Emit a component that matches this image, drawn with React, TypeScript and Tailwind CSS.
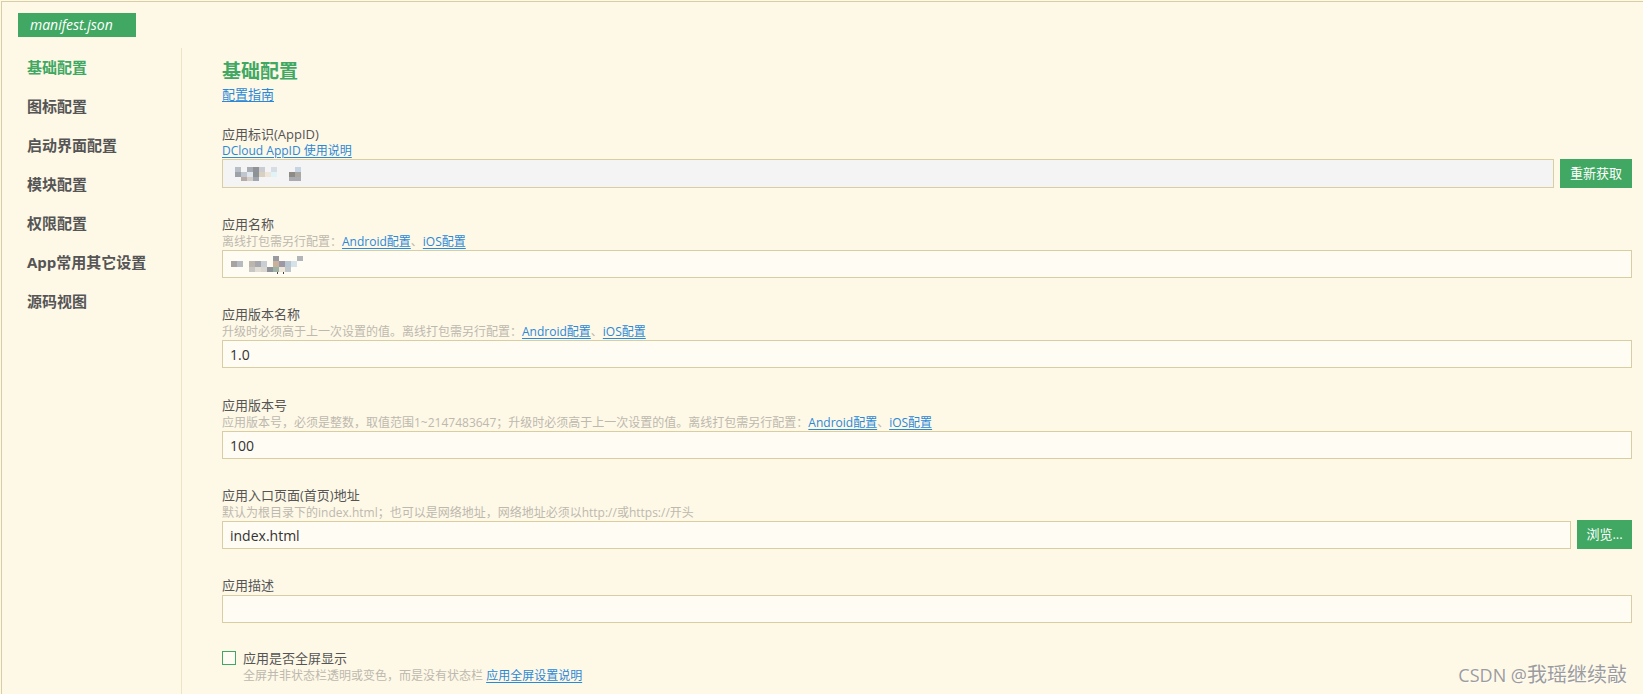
import React from "react";

const FONT = { fontFamily: '"Open Sans", "Noto Sans CJK SC", sans-serif' };

function Link({ children }: { children: React.ReactNode }) {
  return <span className="text-[#2b88d8] underline underline-offset-2 decoration-[#2b88d8]">{children}</span>;
}

function Label({ children }: { children: React.ReactNode }) {
  return <div className="text-[13px] leading-[18px] text-[#555]">{children}</div>;
}

function Hint({ children }: { children: React.ReactNode }) {
  return <div className="text-[12px] leading-[17px] text-[#bdb9ae] whitespace-nowrap">{children}</div>;
}

function Input({ value, children, disabled }: { value?: string; children?: React.ReactNode; disabled?: boolean }) {
  return (
    <div
      className={`flex-1 h-[28px] border border-[#d9cda2] flex items-center pl-[7px] text-[14px] text-[#333] ${
        disabled ? "bg-[#f4f4f4]" : "bg-[#fffcf4]"
      }`}
    >
      {value}
      {children}
    </div>
  );
}

function AppIdMosaic() {
  const r: [number, number, number, number, string][] = [
    [0, 0, 6, 5, "#b8bec6"], [12, 0, 6, 5, "#a9adb3"], [18, 0, 6, 5, "#8f9398"], [24, 0, 6, 5, "#c9ccd0"], [36, 0, 6, 5, "#d6dde5"],
    [0, 5, 6, 5, "#9da2a8"], [6, 5, 6, 5, "#c0c6cd"], [12, 5, 6, 5, "#dfe6ee"], [18, 5, 6, 5, "#8d9297"], [24, 5, 6, 5, "#d8d0c0"],
    [30, 5, 6, 5, "#ece6dc"], [36, 5, 6, 5, "#e0f4f8"],
    [6, 10, 6, 4, "#b5aaa6"], [12, 10, 6, 4, "#d4cec8"], [18, 10, 6, 4, "#a0a6ae"],
    [54, 5, 6, 5, "#8e8a85"], [60, 5, 6, 5, "#aaa7a3"], [60, 0, 6, 5, "#c5d5e3"], [54, 10, 12, 4, "#a9abb0"],
  ];
  return (
    <svg width="72" height="14" className="ml-[2px]">
      {r.map(([x, y, w, h, c], i) => (
        <rect key={i} x={x} y={y} width={w} height={h} fill={c} />
      ))}
    </svg>
  );
}

function NameMosaic() {
  const r: [number, number, number, number, string][] = [
    [0, 5, 6, 6, "#a7a3a1"], [6, 5, 6, 6, "#b6bbc2"],
    [18, 5, 6, 6, "#bdb6ae"], [24, 5, 6, 6, "#a6a8ad"], [30, 5, 6, 6, "#c8ced4"],
    [18, 11, 6, 5, "#c9c7c3"], [24, 11, 6, 5, "#e2ddd5"], [30, 11, 6, 5, "#d9d5cf"], [36, 11, 6, 5, "#8f9299"],
    [42, 0, 6, 5, "#9a9ba0"], [42, 5, 6, 6, "#c9b09a"], [48, 5, 6, 6, "#9d97a6"], [54, 5, 6, 6, "#b9c6d0"], [60, 5, 6, 6, "#d6e2ea"],
    [42, 11, 6, 5, "#9fb2a6"], [48, 11, 6, 5, "#efe7d8"], [54, 11, 6, 5, "#bfc7cd"], [66, 0, 6, 5, "#b3b6b9"],
    [46, 16, 1, 2, "#444"], [52, 16, 1, 2, "#444"],
  ];
  return (
    <svg width="72" height="18" className="mt-[2px] ml-[1px]">
      {r.map(([x, y, w, h, c], i) => (
        <rect key={i} x={x} y={y} width={w} height={h} fill={c} />
      ))}
    </svg>
  );
}

function GreenButton({ children, w }: { children: React.ReactNode; w: string }) {
  return (
    <div className={`${w} h-[29px] bg-[#40a862] text-white text-[13px] flex items-center justify-center`}>{children}</div>
  );
}

const sideItems = ["基础配置", "图标配置", "启动界面配置", "模块配置", "权限配置", "App常用其它设置", "源码视图"];

export default function App() {
  return (
    <div className="relative h-[694px] w-full overflow-hidden bg-[#fef8e7]" style={FONT}>
      <div className="ml-px mt-px h-[693px] border-l border-t border-[#d9cda6] flex flex-col">
        <div className="h-[46px] shrink-0 pl-[16px] pt-[11px]">
          <div className="w-[118px] h-[24px] bg-[#40a862] text-white italic text-[14px] leading-[24px] pl-[12px]">
            manifest.json
          </div>
        </div>
        <div className="flex flex-1 min-h-0">
          <div className="w-[180px] shrink-0 border-r border-[#ede4c8] pl-[25px]">
            {sideItems.map((s, i) => (
              <div
                key={s}
                className={`h-[39px] flex items-center text-[15px] font-bold ${i === 0 ? "text-[#40a862]" : "text-[#555]"}`}
              >
                {s}
              </div>
            ))}
          </div>
          <div className="flex-1 pl-[40px] pr-[11px] pt-[11px]">
            <div className="text-[19px] leading-[24px] font-bold text-[#40a862]">基础配置</div>
            <div className="mt-[2px] text-[13px] leading-[18px]">
              <Link>配置指南</Link>
            </div>

            <div className="mt-[22px]">
              <Label>应用标识(AppID)</Label>
              <div className="text-[12px] leading-[16px]">
                <Link>DCloud AppID 使用说明</Link>
              </div>
              <div className="flex gap-[6px]">
                <div className="flex-1 h-[29px] border border-[#d9cda2] bg-[#f4f4f4] flex items-center pl-[10px]">
                  <AppIdMosaic />
                </div>
                <GreenButton w="w-[72px]">重新获取</GreenButton>
              </div>
            </div>

            <div className="mt-[27px]">
              <Label>应用名称</Label>
              <Hint>
                离线打包需另行配置：<Link>Android配置</Link>、<Link>iOS配置</Link>
              </Hint>
              <div className="flex">
                <Input>
                  <NameMosaic />
                </Input>
              </div>
            </div>

            <div className="mt-[27px]">
              <Label>应用版本名称</Label>
              <Hint>
                升级时必须高于上一次设置的值。离线打包需另行配置：<Link>Android配置</Link>、<Link>iOS配置</Link>
              </Hint>
              <div className="flex">
                <Input value="1.0" />
              </div>
            </div>

            <div className="mt-[28px]">
              <Label>应用版本号</Label>
              <Hint>
                应用版本号，必须是整数，取值范围1~2147483647；升级时必须高于上一次设置的值。离线打包需另行配置：
                <Link>Android配置</Link>、<Link>iOS配置</Link>
              </Hint>
              <div className="flex">
                <Input value="100" />
              </div>
            </div>

            <div className="mt-[27px]">
              <Label>应用入口页面(首页)地址</Label>
              <Hint>默认为根目录下的index.html；也可以是网络地址，网络地址必须以http://或https://开头</Hint>
              <div className="flex gap-[6px] items-start">
                <Input value="index.html" />
                <div className="-mt-px">
                  <GreenButton w="w-[55px]">浏览...</GreenButton>
                </div>
              </div>
            </div>

            <div className="mt-[27px]">
              <Label>应用描述</Label>
              <div className="flex mt-px">
                <Input />
              </div>
            </div>

            <div className="mt-[26px] flex gap-[7px]">
              <div className="mt-[2px] w-[14px] h-[14px] border-[1.5px] border-[#40a862] bg-[#fffcf4] shrink-0" />
              <div>
                <Label>应用是否全屏显示</Label>
                <Hint>
                  全屏并非状态栏透明或变色，而是没有状态栏 <Link>应用全屏设置说明</Link>
                </Hint>
              </div>
            </div>
          </div>
        </div>
      </div>
      <div
        className="absolute right-[16px] bottom-[7px] text-[20px] leading-[24px] text-[#9c9c9c] flex items-baseline"
        style={{ textShadow: "1px 1px 0 rgba(255,255,255,0.8)" }}
      >
        <span className="text-[18px]" style={{ fontFamily: '"Open Sans", sans-serif' }}>
          CSDN @
        </span>
        <span style={{ fontFamily: '"Noto Sans CJK SC", sans-serif' }}>我瑶继续敲</span>
      </div>
    </div>
  );
}
